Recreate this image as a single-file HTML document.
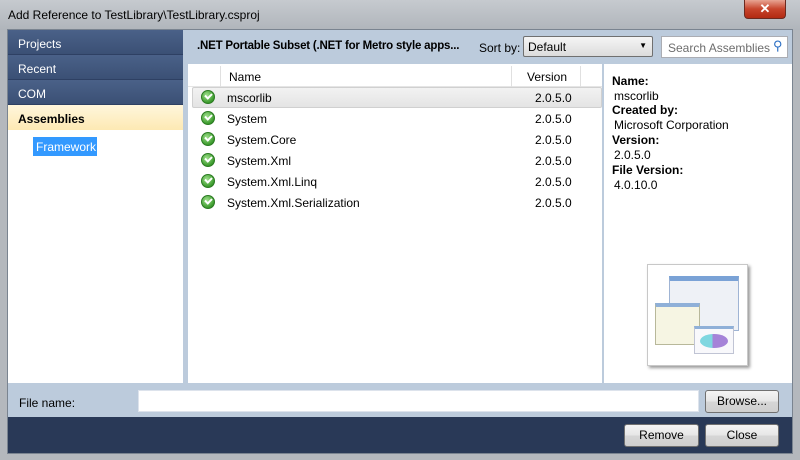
<!DOCTYPE html>
<html><head><style>
*{margin:0;padding:0;box-sizing:border-box}
body{width:800px;height:460px;overflow:hidden;background:#b4b8bd;font-family:"Liberation Sans",sans-serif;font-size:12px;color:#000;position:relative}
.abs{position:absolute}
.nav{position:absolute;left:8px;width:175px;height:25px;padding:7px 10px;color:#fff;font-size:12px;background:linear-gradient(#4a6188,#3b5075);border-bottom:1px solid #2e4063}
.btn{position:absolute;height:23px;border:1px solid #707070;border-radius:3px;background:linear-gradient(#f4f4f4 0,#e6e6e6 50%,#d6d6d6 51%,#cfcfcf);text-align:center;line-height:21px;font-size:12px}
.row{position:absolute;left:192px;width:410px;height:21px}
.row .n{position:absolute;left:35px;top:4px}
.row .v{position:absolute;left:343px;top:4px}
.chk{position:absolute;left:9px;top:3px;width:14px;height:14px;border-radius:50%;background:radial-gradient(circle at 40% 35%,#9fe08c,#3c9b2d 70%,#2a7a20);border:1px solid #2b7a22}
.chk:after{content:"";position:absolute;left:3px;top:2px;width:5px;height:3px;border-left:2px solid #fff;border-bottom:2px solid #fff;transform:rotate(-45deg)}
.d{position:absolute;left:612px;font-size:12px}
.b{font-weight:bold}
</style></head><body>
<div class="abs" style="left:0;top:0;width:800px;height:30px;background:linear-gradient(#c6cacf,#b0b5bb)"></div>
<div class="abs" style="left:8px;top:8px;font-size:12px">Add Reference to TestLibrary\TestLibrary.csproj</div>
<div class="abs" style="left:744px;top:0;width:42px;height:19px;border:1px solid #6b2a20;border-top:none;border-radius:0 0 4px 4px;background:linear-gradient(#e8a493,#c7442c 50%,#b22a12);color:#fff;text-align:center;font-weight:bold;font-size:13px;line-height:17px">✕</div>
<div class="abs" style="left:7px;top:29px;width:786px;height:425px;background:#bccbdc;border:1px solid #7a8490"></div>
<div class="abs" style="left:8px;top:30px;width:176px;height:353px;background:#fff;border-right:1px solid #bccbdc"></div>
<div class="nav" style="top:30px">Projects</div>
<div class="nav" style="top:55px">Recent</div>
<div class="nav" style="top:80px">COM</div>
<div class="nav" style="top:105px;background:linear-gradient(#fff6dc,#fde9b3);color:#000;font-weight:bold;border-bottom:none">Assemblies</div>
<div class="abs" style="left:33px;top:137px;width:64px;height:19px;background:#3399ff;color:#fff;padding:3px 3px">Framework</div>
<div class="abs b" style="left:197px;top:40px;font-size:11.5px;letter-spacing:-0.2px;white-space:nowrap;width:282px;overflow:hidden">.NET Portable Subset (.NET for Metro style apps...</div>
<div class="abs" style="left:479px;top:41px">Sort by:</div>
<div class="abs" style="left:523px;top:36px;width:130px;height:21px;border:1px solid #707070;border-radius:2px;background:linear-gradient(#f5f5f5,#dcdcdc);padding:3px 4px">Default<span style="position:absolute;right:5px;top:4px;font-size:8px">▼</span></div>
<div class="abs" style="left:661px;top:36px;width:127px;height:22px;border:1px solid #abadb3;background:#fff;color:#6d6d6d;padding:4px 6px">Search Assemblies<span style="position:absolute;right:4px;top:1px;color:#2c6fc4;font-size:13px;transform:scaleX(-1)">⚲</span></div>
<div class="abs" style="left:188px;top:64px;width:414px;height:319px;background:#fff"></div>
<div class="abs" style="left:603px;top:64px;width:189px;height:319px;background:#fff;border-left:1px solid #bccbdc"></div>
<div class="abs" style="left:188px;top:66px;width:414px;height:21px;background:#fff;border-bottom:1px solid #e5e5e5"></div>
<div class="abs" style="left:220px;top:66px;width:1px;height:21px;background:#e0e0e0"></div>
<div class="abs" style="left:511px;top:66px;width:1px;height:21px;background:#e0e0e0"></div>
<div class="abs" style="left:580px;top:66px;width:1px;height:21px;background:#e0e0e0"></div>
<div class="abs" style="left:229px;top:70px">Name</div>
<div class="abs" style="left:527px;top:70px">Version</div>
<div class="abs" style="left:192px;top:87px;width:410px;height:21px;background:linear-gradient(#f2f2f2,#e4e4e4);border:1px solid #d0d0d0;border-radius:2px"></div>
<div class="row" style="top:87px"><div class="chk"></div><div class="n">mscorlib</div><div class="v">2.0.5.0</div></div>
<div class="row" style="top:108px"><div class="chk"></div><div class="n">System</div><div class="v">2.0.5.0</div></div>
<div class="row" style="top:129px"><div class="chk"></div><div class="n">System.Core</div><div class="v">2.0.5.0</div></div>
<div class="row" style="top:150px"><div class="chk"></div><div class="n">System.Xml</div><div class="v">2.0.5.0</div></div>
<div class="row" style="top:171px"><div class="chk"></div><div class="n">System.Xml.Linq</div><div class="v">2.0.5.0</div></div>
<div class="row" style="top:192px"><div class="chk"></div><div class="n">System.Xml.Serialization</div><div class="v">2.0.5.0</div></div>
<div class="d b" style="top:74px">Name:</div>
<div class="d" style="top:89px;left:614px">mscorlib</div>
<div class="d b" style="top:103px">Created by:</div>
<div class="d" style="top:118px;left:614px">Microsoft Corporation</div>
<div class="d b" style="top:133px">Version:</div>
<div class="d" style="top:148px;left:614px">2.0.5.0</div>
<div class="d b" style="top:163px">File Version:</div>
<div class="d" style="top:178px;left:614px">4.0.10.0</div>
<div class="abs" style="left:647px;top:264px;width:101px;height:102px;background:#fff;border:1px solid #c8c8c8;box-shadow:2px 2px 3px #999"></div>
<div class="abs" style="left:669px;top:276px;width:70px;height:55px;background:#eef1f6;border:1px solid #9fb4d4;border-top:5px solid #7aa2d6"></div>
<div class="abs" style="left:655px;top:303px;width:45px;height:42px;background:#f6f5e3;border:1px solid #b8b89a;border-top:4px solid #8fb0d8"></div>
<div class="abs" style="left:694px;top:326px;width:40px;height:28px;background:#f8f8fb;border:1px solid #c0c4d4;border-top:3px solid #8fb0d8"></div>
<div class="abs" style="left:700px;top:334px;width:28px;height:14px;border-radius:50%;background:linear-gradient(90deg,#7fd7e0 45%,#a583d8 45%)"></div>
<div class="abs" style="left:19px;top:396px">File name:</div>
<div class="abs" style="left:138px;top:390px;width:561px;height:22px;background:#fff;border:1px solid #dde3ec"></div>
<div class="btn" style="left:705px;top:390px;width:74px">Browse...</div>
<div class="abs" style="left:8px;top:417px;width:784px;height:36px;background:#293957"></div>
<div class="btn" style="left:624px;top:424px;width:75px">Remove</div>
<div class="btn" style="left:705px;top:424px;width:74px">Close</div>
</body></html>
